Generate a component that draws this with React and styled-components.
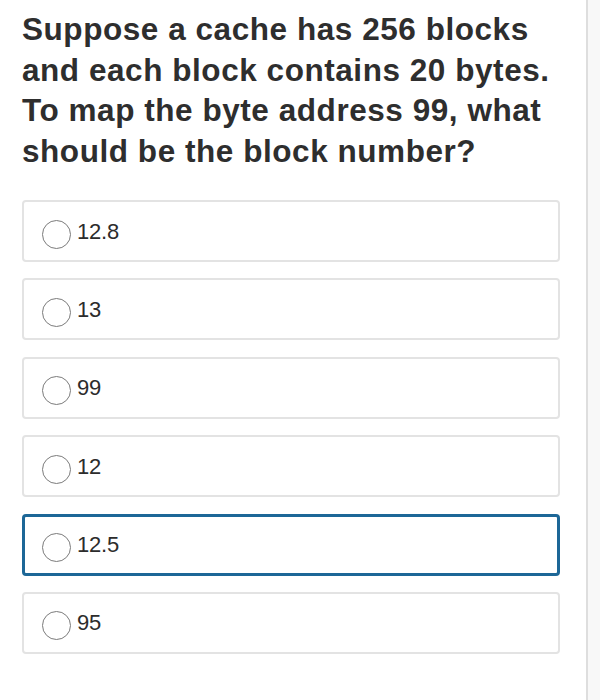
import React from "react";
import styled, { createGlobalStyle } from "styled-components";

const Global = createGlobalStyle`
  html, body { margin: 0; padding: 0; background: #f8f8f8; }
  body { font-family: "Liberation Sans", Arial, sans-serif; }
`;

const Page = styled.div`
  width: 588px;
  min-height: 700px;
  box-sizing: border-box;
  background: #ffffff;
  border-right: 2px solid #dedede;
  padding: 9px 28px 0 22px;
`;

const Question = styled.h1`
  margin: 0;
  font-size: 31.5px;
  line-height: 40.5px;
  font-weight: 700;
  color: #2e2e2e;
  letter-spacing: 0.55px;
`;

const Options = styled.div`
  display: flex;
  flex-direction: column;
  gap: 16.4px;
  margin-top: 29px;
  width: 538px;
`;

const Option = styled.label`
  display: flex;
  align-items: center;
  box-sizing: border-box;
  height: 62px;
  border: ${(p) => (p.$selected ? "3px solid #1d6797" : "2px solid #e3e3e3")};
  border-radius: 4px;
  padding-left: ${(p) => (p.$selected ? "17px" : "18px")};
  background: #fff;
  cursor: pointer;
`;

const Radio = styled.span`
  width: 27px;
  height: 27px;
  border: 1.6px solid #7b7b7b;
  border-radius: 50%;
  flex-shrink: 0;
  margin-top: 6px;
  margin-right: 6px;
`;

const Label = styled.span`
  font-size: 22px;
  color: #2c2c2c;
  letter-spacing: -0.2px;
  margin-top: 1px;
`;

const options = ["12.8", "13", "99", "12", "12.5", "95"];

export default function App() {
  return (
    <>
      <Global />
      <Page>
        <Question>
          Suppose a cache has 256 blocks
          <br />
          and each block contains 20 bytes.
          <br />
          To map the byte address 99, what
          <br />
          should be the block number?
        </Question>
        <Options>
          {options.map((o) => (
            <Option key={o} $selected={o === "12.5"}>
              <Radio />
              <Label>{o}</Label>
            </Option>
          ))}
        </Options>
      </Page>
    </>
  );
}
